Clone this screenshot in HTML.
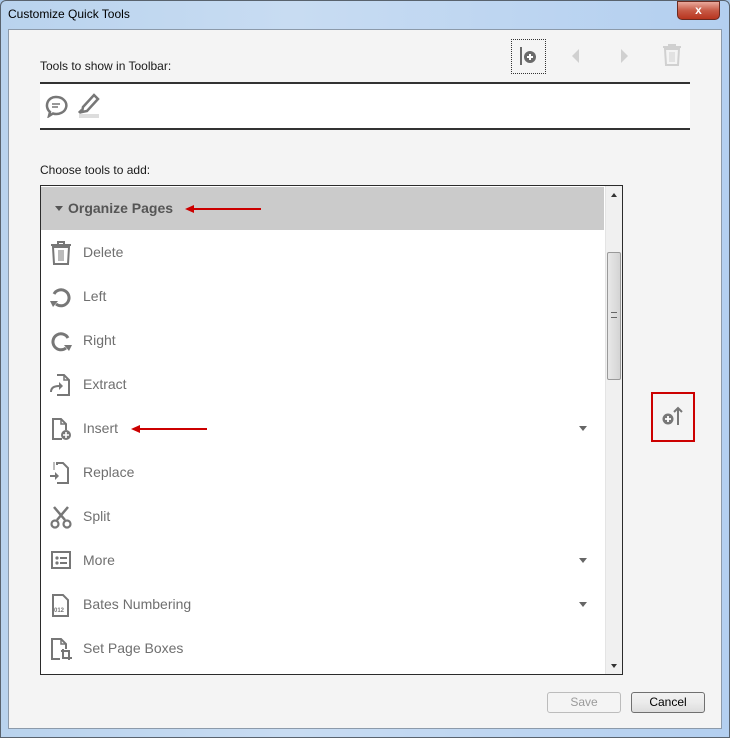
<!DOCTYPE html>
<html><head><style>
*{margin:0;padding:0;box-sizing:border-box}
body{width:730px;height:738px;background:#a9c8ea;font-family:"Liberation Sans",sans-serif;position:relative;overflow:hidden}
.frame{position:absolute;left:0;top:0;width:730px;height:738px;background:linear-gradient(90deg,#b9d3ee,#c8dcf2 40%,#b3cff0);border:1px solid #59636e;border-radius:6px 6px 0 0}
.title{position:absolute;left:8px;top:7px;font-size:12px;color:#000}
.close{position:absolute;left:677px;top:1px;width:43px;height:19px;background:linear-gradient(#e9a99c,#c75a46 50%,#b8351f);border:1px solid #6b2a20;border-radius:0 0 5px 5px;color:#fff;font-weight:bold;font-size:12px;text-align:center;line-height:17px}
.client{position:absolute;left:8px;top:29px;width:714px;height:700px;background:#f4f4f4;border:1px solid #8c9aaa}
.abs{position:absolute}
.lbl{font-size:12px;color:#1a1a1a}
.list{position:absolute;left:40px;top:185px;width:583px;height:490px;border:1px solid #2b2b2b;background:#fff;overflow:hidden}
.hdr{position:absolute;left:0;top:1px;width:563px;height:43px;background:#cbcbcb}
.row{position:absolute;left:0;width:563px;height:44px}
.row span{position:absolute;left:42px;top:13px;font-size:14px;color:#6f6f6f}
.row svg{position:absolute;left:8px;top:10px}
.dd{position:absolute;left:538px;top:19px;width:0;height:0;border-left:4px solid transparent;border-right:4px solid transparent;border-top:5px solid #666}
.sb{position:absolute;left:564px;top:0;width:17px;height:488px;background:#f0f0f0;border-left:1px solid #e4e4e4}
.btn{position:absolute;height:21px;font-size:12px;text-align:center;line-height:19px;border-radius:3px}
</style></head><body>
<div class="frame"></div>
<div class="title">Customize Quick Tools</div>
<div class="close">x</div>
<div class="client"></div>

<div class="abs lbl" style="left:40px;top:59px">Tools to show in Toolbar:</div>
<div class="abs" style="left:511px;top:39px;width:35px;height:35px;border:1px dotted #333"></div>
<svg class="abs" style="left:517px;top:45px" width="22" height="22"><rect x="3" y="2" width="2" height="18" fill="#6a6a6a"/><circle cx="13" cy="12" r="6" fill="#6a6a6a"/><path d="M10 12h6M13 9v6" stroke="#fff" stroke-width="2"/></svg>
<svg class="abs" style="left:568px;top:47px" width="14" height="18"><path d="M11 2L4 9l7 7z" fill="#d0d0d0"/></svg>
<svg class="abs" style="left:618px;top:47px" width="14" height="18"><path d="M3 2l7 7-7 7z" fill="#d0d0d0"/></svg>
<svg class="abs" style="left:661px;top:43px" width="22" height="24"><path d="M2 4h18M8 4V2h6v2" stroke="#d0d0d0" stroke-width="2" fill="none"/><path d="M4 6h14l-1 16H5z" fill="none" stroke="#d0d0d0" stroke-width="2"/><path d="M9 9v10M11 9v10M13 9v10" stroke="#d0d0d0"/></svg>

<div class="abs" style="left:40px;top:82px;width:650px;height:48px;background:#fff;border-top:2px solid #333;border-bottom:2px solid #333"></div>
<svg class="abs" style="left:44px;top:94px" width="26" height="24"><path d="M12 3a10 8.5 0 1 1-3 16.5L5 22l1-4A8.5 8.5 0 0 1 12 3z" fill="none" stroke="#777" stroke-width="2.5"/><path d="M8 10h8M8 13h6" stroke="#777" stroke-width="1.5"/></svg>
<svg class="abs" style="left:75px;top:93px" width="26" height="26"><path d="M19 2l4 4-11 12-5 1 1-5z" fill="none" stroke="#777" stroke-width="2.5"/><path d="M4 20l3-3" stroke="#777" stroke-width="3"/><rect x="4" y="21" width="20" height="4" fill="#ddd"/></svg>

<div class="abs lbl" style="left:40px;top:163px">Choose tools to add:</div>

<div class="list">
 <div class="hdr"><div style="position:absolute;left:14px;top:19px;border-left:4px solid transparent;border-right:4px solid transparent;border-top:5px solid #555"></div><span style="position:absolute;left:27px;top:13px;font-size:14px;font-weight:bold;color:#555">Organize Pages</span>
 <svg style="position:absolute;left:144px;top:17px" width="78" height="10"><path d="M0 5l9-4v8z" fill="#c00"/><path d="M8 5h68" stroke="#c00" stroke-width="2"/></svg></div>
 <div class="row" style="top:45px"><svg width="24" height="24"><path d="M2 4h20M9 4V1h6v3" stroke="#777" stroke-width="2" fill="none"/><path d="M4 6h16l-1 17H5z" fill="none" stroke="#777" stroke-width="2"/><path d="M10 9v11M12 9v11M14 9v11" stroke="#777"/></svg><span>Delete</span></div>
 <div class="row" style="top:89px"><svg width="24" height="24"><path d="M7 19A8 8 0 1 0 5 9" fill="none" stroke="#777" stroke-width="3"/><path d="M1 16h8l-5 6z" fill="#777"/></svg><span>Left</span></div>
 <div class="row" style="top:133px"><svg width="24" height="24"><path d="M17 19A8 8 0 1 1 19 9" fill="none" stroke="#777" stroke-width="3"/><path d="M23 16h-8l5 6z" fill="#777"/></svg><span>Right</span></div>
 <div class="row" style="top:177px"><svg width="24" height="24"><path d="M8 2h7l5 5v15H8" fill="none" stroke="#777" stroke-width="2"/><path d="M15 2v5h5" fill="none" stroke="#777" stroke-width="1.5"/><path d="M2 19q0-6 8-6" fill="none" stroke="#777" stroke-width="2"/><path d="M10 9l4 4-4 4z" fill="#777"/></svg><span>Extract</span></div>
 <div class="row" style="top:221px"><svg width="24" height="24"><path d="M13 22H4V2h8l5 5v6" fill="none" stroke="#777" stroke-width="2"/><path d="M12 2v5h5" fill="none" stroke="#777" stroke-width="1.5"/><circle cx="17" cy="18" r="5" fill="#777"/><path d="M14 18h6M17 15v6" stroke="#fff" stroke-width="1.6"/></svg><span>Insert</span>
 <svg style="position:absolute;left:90px;top:17px" width="78" height="10"><path d="M0 5l9-4v8z" fill="#c00"/><path d="M8 5h68" stroke="#c00" stroke-width="2"/></svg><div class="dd"></div></div>
 <div class="row" style="top:265px"><svg width="24" height="24"><path d="M8 4V2h6l5 5v15H8" fill="none" stroke="#777" stroke-width="2"/><path d="M5 1v8" stroke="#bbb" stroke-width="2"/><path d="M1 15h6" stroke="#777" stroke-width="2"/><path d="M6 11l4 4-4 4z" fill="#777"/></svg><span>Replace</span></div>
 <div class="row" style="top:309px"><svg width="24" height="24"><path d="M5 2l11 13M19 2L8 15" stroke="#777" stroke-width="2.5"/><circle cx="6" cy="19" r="3.5" fill="none" stroke="#777" stroke-width="2.2"/><circle cx="18" cy="19" r="3.5" fill="none" stroke="#777" stroke-width="2.2"/></svg><span>Split</span></div>
 <div class="row" style="top:353px"><svg width="24" height="24"><rect x="3" y="3" width="18" height="16" fill="none" stroke="#777" stroke-width="2"/><circle cx="8" cy="9" r="1.6" fill="#777"/><circle cx="8" cy="14" r="1.6" fill="#777"/><path d="M11 9h7M11 14h7" stroke="#777" stroke-width="2"/></svg><div class="dd"></div><span>More</span></div>
 <div class="row" style="top:397px"><svg width="24" height="24"><path d="M4 2h10l5 5v16H4z" fill="none" stroke="#777" stroke-width="2"/><text x="5" y="19" font-size="6" font-family="Liberation Sans" fill="#777" font-weight="bold">012</text></svg><div class="dd"></div><span>Bates Numbering</span></div>
 <div class="row" style="top:441px"><svg width="24" height="24"><path d="M11 22H3V2h9l5 5v5" fill="none" stroke="#777" stroke-width="2"/><path d="M12 2v5h5" fill="none" stroke="#777" stroke-width="1.5"/><path d="M14 12v9h9M12 14h8v9" fill="none" stroke="#777" stroke-width="2"/></svg><span>Set Page Boxes</span></div>
 <div class="sb">
  <div style="position:absolute;left:5px;top:7px;border-left:3px solid transparent;border-right:3px solid transparent;border-bottom:4px solid #333"></div>
  <div style="position:absolute;left:1px;top:66px;width:14px;height:128px;background:linear-gradient(90deg,#e8e8e8,#d4d4d4);border:1px solid #999;border-radius:2px"></div>
  <div style="position:absolute;left:5px;top:126px;width:6px;height:6px;border-top:1px solid #666;border-bottom:1px solid #666"></div>
  <div style="position:absolute;left:5px;top:478px;border-left:3px solid transparent;border-right:3px solid transparent;border-top:4px solid #333"></div>
 </div>
</div>

<div class="abs" style="left:651px;top:392px;width:44px;height:50px;border:2px solid #c00"></div>
<svg class="abs" style="left:660px;top:405px" width="26" height="22"><circle cx="8" cy="14" r="5.5" fill="#777"/><path d="M5 14h6M8 11v6" stroke="#fff" stroke-width="1.8"/><path d="M18 20V3M14 7l4-4 4 4" fill="none" stroke="#777" stroke-width="2"/></svg>

<div class="btn" style="left:547px;top:692px;width:74px;border:1px solid #bcbcbc;background:#f4f4f4;color:#9a9a9a">Save</div>
<div class="btn" style="left:631px;top:692px;width:74px;border:1px solid #707070;background:linear-gradient(#f2f2f2,#ebebeb 50%,#dddddd);color:#000">Cancel</div>
</body></html>
